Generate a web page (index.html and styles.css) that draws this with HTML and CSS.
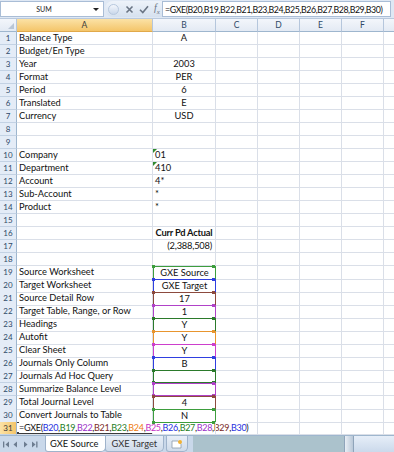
FILE: index.html
```html
<!DOCTYPE html>
<html>
<head>
<meta charset="utf-8">
<link rel="stylesheet" href="styles.css">
</head>
<body>
<div class="app">
  <div class="fbar">
    <div class="namebox"><span class="nb-text">SUM</span><span class="nb-arrow"></span></div>
    <div class="fbtns">
      <span class="pill-knob"></span>
      <svg class="ic" width="9" height="9" viewBox="0 0 9 9"><path d="M1.5 1.5 L7.5 7.5 M7.5 1.5 L1.5 7.5" stroke="#6a7584" stroke-width="1.6" fill="none"/></svg>
      <svg class="ic" width="10" height="9" viewBox="0 0 10 9"><path d="M1 4.8 L3.8 7.6 L9 1.2" stroke="#6a7584" stroke-width="1.6" fill="none"/></svg>
      <span class="fx">f<sub>x</sub></span>
    </div>
    <div class="finput">=GXE(B20,B19,B22,B21,B23,B24,B25,B26,B27,B28,B29,B30)</div>
  </div>

  <div class="colhead">
    <div class="corner"><span class="corner-tri"></span></div>
    <div class="ch sel">A</div>
    <div class="ch">B</div>
    <div class="ch">C</div>
    <div class="ch">D</div>
    <div class="ch">E</div>
    <div class="ch">F</div>
    <div class="ch last"></div>
  </div>

  <div class="sheet">
    <div class="row"><div class="rh">1</div><div class="a">Balance Type</div><div class="b ctr">A</div><div class="rest"></div></div>
    <div class="row"><div class="rh">2</div><div class="a">Budget/En Type</div><div class="b"></div><div class="rest"></div></div>
    <div class="row"><div class="rh">3</div><div class="a">Year</div><div class="b ctr">2003</div><div class="rest"></div></div>
    <div class="row"><div class="rh">4</div><div class="a">Format</div><div class="b ctr">PER</div><div class="rest"></div></div>
    <div class="row"><div class="rh">5</div><div class="a">Period</div><div class="b ctr">6</div><div class="rest"></div></div>
    <div class="row"><div class="rh">6</div><div class="a">Translated</div><div class="b ctr">E</div><div class="rest"></div></div>
    <div class="row"><div class="rh">7</div><div class="a">Currency</div><div class="b ctr">USD</div><div class="rest"></div></div>
    <div class="row"><div class="rh">8</div><div class="a"></div><div class="b"></div><div class="rest"></div></div>
    <div class="row"><div class="rh">9</div><div class="a"></div><div class="b"></div><div class="rest"></div></div>
    <div class="row"><div class="rh">10</div><div class="a">Company</div><div class="b tri">01</div><div class="rest"></div></div>
    <div class="row"><div class="rh">11</div><div class="a">Department</div><div class="b tri">410</div><div class="rest"></div></div>
    <div class="row"><div class="rh">12</div><div class="a">Account</div><div class="b">4*</div><div class="rest"></div></div>
    <div class="row"><div class="rh">13</div><div class="a">Sub-Account</div><div class="b">*</div><div class="rest"></div></div>
    <div class="row"><div class="rh">14</div><div class="a">Product</div><div class="b">*</div><div class="rest"></div></div>
    <div class="row"><div class="rh">15</div><div class="a"></div><div class="b"></div><div class="rest"></div></div>
    <div class="row"><div class="rh">16</div><div class="a"></div><div class="b ctr bold">Curr Pd Actual</div><div class="rest"></div></div>
    <div class="row"><div class="rh">17</div><div class="a"></div><div class="b rgt">(2,388,508)</div><div class="rest"></div></div>
    <div class="row"><div class="rh">18</div><div class="a"></div><div class="b"></div><div class="rest"></div></div>
    <div class="row"><div class="rh">19</div><div class="a">Source Worksheet</div><div class="b ctr ref green">GXE Source</div><div class="rest"></div></div>
    <div class="row"><div class="rh">20</div><div class="a">Target Worksheet</div><div class="b ctr ref blue">GXE Target</div><div class="rest"></div></div>
    <div class="row"><div class="rh">21</div><div class="a">Source Detail Row</div><div class="b ctr ref maroon">17</div><div class="rest"></div></div>
    <div class="row"><div class="rh">22</div><div class="a">Target Table, Range, or Row</div><div class="b ctr ref purple">1</div><div class="rest"></div></div>
    <div class="row"><div class="rh">23</div><div class="a">Headings</div><div class="b ctr ref green2">Y</div><div class="rest"></div></div>
    <div class="row"><div class="rh">24</div><div class="a">Autofit</div><div class="b ctr ref orange">Y</div><div class="rest"></div></div>
    <div class="row"><div class="rh">25</div><div class="a">Clear Sheet</div><div class="b ctr ref magenta">Y</div><div class="rest"></div></div>
    <div class="row"><div class="rh">26</div><div class="a">Journals Only Column</div><div class="b ctr ref blue">B</div><div class="rest"></div></div>
    <div class="row"><div class="rh">27</div><div class="a">Journals Ad Hoc Query</div><div class="b ctr ref green2"></div><div class="rest"></div></div>
    <div class="row"><div class="rh">28</div><div class="a">Summarize Balance Level</div><div class="b ctr ref purple"></div><div class="rest"></div></div>
    <div class="row"><div class="rh">29</div><div class="a">Total Journal Level</div><div class="b ctr ref maroon">4</div><div class="rest"></div></div>
    <div class="row"><div class="rh">30</div><div class="a">Convert Journals to Table</div><div class="b ctr ref green">N</div><div class="rest"></div></div>
    <div class="row"><div class="rh sel">31</div><div class="a active"><span class="formula">=GXE(<span class="k-blue">B20</span>,<span class="k-green">B19</span>,<span class="k-purple">B22</span>,<span class="k-maroon">B21</span>,<span class="k-green">B23</span>,<span class="k-orange">B24</span>,<span class="k-magenta">B25</span>,<span class="k-blue">B26</span>,<span class="k-green">B27</span>,<span class="k-purple">B28</span>,<span class="k-maroon">B29</span>,<span class="k-blue">B30</span>)</span></div><div class="b"></div><div class="rest"></div></div>
  </div>

  <div class="tabbar">
    <div class="nav">
      <svg width="40" height="9" viewBox="0 0 40 9">
        <rect x="2" y="1.5" width="1.3" height="6" fill="#6c7c90"/>
        <path d="M8 1.5 L4.5 4.5 L8 7.5 Z" fill="#6c7c90"/>
        <path d="M16 1.5 L12.5 4.5 L16 7.5 Z" fill="#6c7c90"/>
        <path d="M23 1.5 L26.5 4.5 L23 7.5 Z" fill="#6c7c90"/>
        <path d="M31 1.5 L34.5 4.5 L31 7.5 Z" fill="#6c7c90"/>
        <rect x="35.2" y="1.5" width="1.3" height="6" fill="#6c7c90"/>
      </svg>
    </div>
    <div class="tab active">GXE Source</div>
    <div class="tab">GXE Target</div>
    <div class="tab newtab">
      <svg width="14" height="10" viewBox="0 0 14 10">
        <path d="M2 9 L2 2 L8 2 L11 5 L11 9 Z" fill="#fff" stroke="#8a99aa" stroke-width="0.8"/>
        <circle cx="10" cy="3" r="2" fill="#f2b233"/>
      </svg>
    </div>
    <div class="strip"></div>
    <div class="split"></div>
    <div class="hscroll"></div>
  </div>
</div>
</body>
</html>
```
FILE: styles.css
```css
html, body {
  margin: 0;
  padding: 0;
  background: #ffffff;
}
.app {
  width: 394px;
  height: 452px;
  overflow: hidden;
  font-family: Lato, "Open Sans", sans-serif;
  font-size: 9.3px;
  color: #111;
}

/* formula bar */
.fbar {
  display: flex;
  height: 19px;
  background: #dfe8f4;
  box-sizing: border-box;
  padding: 1px 3px 1px 0;
  border-bottom: 1px solid #b9c9dd;
}
.namebox {
  width: 104px;
  background: #fff;
  border: 1px solid #a9bdd6;
  box-sizing: border-box;
  display: flex;
  align-items: center;
  font-size: 7px;
  color: #222;
}
.nb-text {
  flex: 1;
  text-align: center;
  margin-right: 6px;
}
.nb-arrow {
  width: 0;
  height: 0;
  border-left: 3px solid transparent;
  border-right: 3px solid transparent;
  border-top: 3px solid #222;
  margin-right: 4px;
}
.fbtns {
  width: 57px;
  display: flex;
  align-items: center;
  gap: 5px;
  padding-left: 3px;
  box-sizing: border-box;
  background: linear-gradient(#eef3fa, #d6e1ef);
  border-radius: 8px 0 0 8px;
  margin-left: 1px;
}
.pill-knob {
  width: 11px;
  height: 11px;
  border-radius: 50%;
  background: linear-gradient(#f4f7fc, #c9d7ea);
  border: 1px solid #b7c8de;
  box-sizing: border-box;
  margin-right: 1px;
}
.ic { display: block; }
.fx {
  font-family: "Liberation Serif", serif;
  font-style: italic;
  font-size: 10px;
  color: #6a7584;
  line-height: 1;
}
.fx sub { font-size: 7px; }
.finput {
  flex: 1;
  background: #fff;
  border: 1px solid #a9bdd6;
  box-sizing: border-box;
  font-size: 8.8px;
  letter-spacing: -0.42px;
  line-height: 15px;
  padding-left: 2px;
  white-space: nowrap;
  overflow: hidden;
  color: #111;
}

/* column header */
.colhead {
  display: grid;
  grid-template-columns: 17px 136px 63px 42px 42px 42px 42px 1fr;
  height: 13px;
  background: linear-gradient(#f3f6fb, #e2e9f3);
}
.corner, .ch {
  box-sizing: border-box;
  border-right: 1px solid #b5c6dc;
  border-bottom: 1px solid #9eb6ce;
  font-size: 8.5px;
  line-height: 12px;
  text-align: center;
  color: #2f4a68;
}
.corner {
  display: flex;
  align-items: flex-end;
  justify-content: flex-end;
  padding: 0 2px 2px 0;
}
.corner-tri {
  width: 0;
  height: 0;
  border-left: 6px solid transparent;
  border-bottom: 6px solid #b9c6d6;
}
.ch.sel {
  background: linear-gradient(#fbe2a6, #f4c56a);
  border-bottom-color: #e1a94a;
  color: #3a3a3a;
}
.ch.last { border-right: none; }

/* sheet */
.sheet {
  display: flex;
  flex-direction: column;
}
.row {
  display: grid;
  grid-template-columns: 17px 136px 63px 1fr;
  height: 13px;
}
.row > div {
  box-sizing: border-box;
  line-height: 12px;
  white-space: nowrap;
}
.rh {
  background: #e4ecf7;
  border-right: 1px solid #9eb6ce;
  border-bottom: 1px solid #c3d2e4;
  text-align: center;
  font-size: 8px;
  color: #2f4a68;
}
.rh.sel {
  background: linear-gradient(90deg, #fbe2a6, #f4c56a);
  color: #3a3a3a;
}
.a, .b {
  border-right: 1px solid #dadfe8;
  border-bottom: 1px solid #dadfe8;
  padding-left: 2px;
}
.b { position: relative; }
.ctr { text-align: center; padding-left: 0; }
.rgt { text-align: right; padding-right: 3px; letter-spacing: -0.2px; }
.bold { font-weight: bold; letter-spacing: -0.2px; }
.rest {
  border-bottom: 1px solid #dadfe8;
  background: repeating-linear-gradient(to right, transparent 0 41px, #dadfe8 41px 42px);
}
.tri::before {
  content: "";
  position: absolute;
  left: 0;
  top: 0;
  border-top: 4px solid #2f8a2f;
  border-right: 4px solid transparent;
}

/* range-finder boxes */
.ref {
  border: 1px solid var(--c);
}
.ref::before, .ref::after {
  content: "";
  position: absolute;
  left: -2px;
  width: 3px;
  height: 3px;
  background: var(--c);
  box-shadow: 60px 0 0 var(--c);
}
.ref::before { top: -2px; }
.ref::after { bottom: -2px; }
.green { --c: #3d9d3d; }
.green2 { --c: #2b7a2b; }
.blue { --c: #2f3fe0; }
.maroon { --c: #8c4a3e; }
.purple { --c: #b042c8; }
.magenta { --c: #cc3fcc; }
.orange { --c: #e8952e; }

/* active formula cell */
.a.active {
  overflow: visible;
  box-shadow: inset 0 1px 0 #3b3b3b, inset 0 -2px 0 #3b3b3b;
  padding-left: 2px;
}
.formula {
  background: #fff;
  font-size: 9px;
  letter-spacing: -0.3px;
  color: #111;
}
.k-blue { color: #1f2fe0; }
.k-green { color: #1d7d1d; }
.k-purple { color: #9a2fc8; }
.k-maroon { color: #7a2a1f; }
.k-orange { color: #ee7a10; }
.k-magenta { color: #c42fc4; }

/* tab bar */
.tabbar {
  display: flex;
  align-items: stretch;
  height: 17px;
  background: #c9d8ea;
  border-top: 1px solid #9eb6ce;
  box-sizing: border-box;
}
.nav {
  width: 44px;
  display: flex;
  align-items: center;
  padding-left: 1px;
}
.tab {
  display: flex;
  align-items: center;
  padding: 0 6px;
  font-size: 9.3px;
  color: #333;
  background: linear-gradient(#e7eef7, #cfdbea);
  border: 1px solid #9fb3cb;
  border-top: none;
  border-radius: 0 0 5px 3px;
  margin-right: -1px;
}
.tab.active {
  background: #fff;
  color: #111;
  z-index: 1;
  padding: 0 6px 0 4px;
}
.tab.newtab {
  padding: 0 3px;
  margin-left: 3px;
}
.strip {
  flex: 1;
  margin-left: 6px;
  background: #abc2cc;
}
.split {
  width: 8px;
  background: linear-gradient(90deg, #e8eef5, #b9c8d8);
  border-left: 1px solid #8fa4ba;
  border-right: 1px solid #8fa4ba;
}
.hscroll {
  width: 40px;
  background: linear-gradient(#e6eef8, #cbd9eb);
}
```
